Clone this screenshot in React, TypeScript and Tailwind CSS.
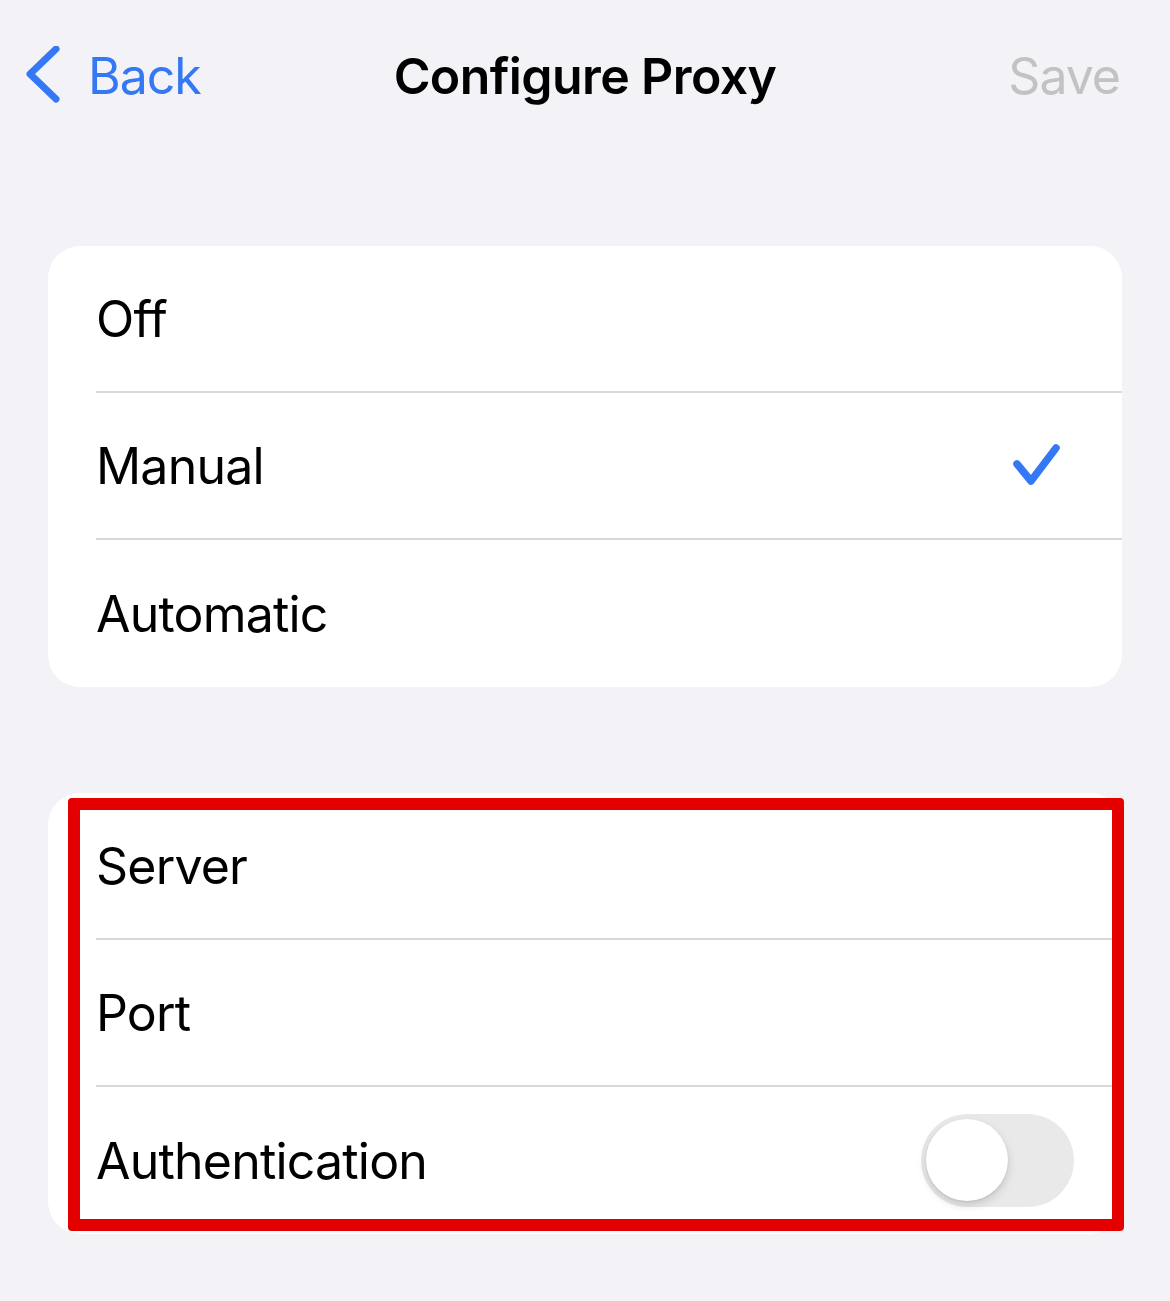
import { useState } from 'react';

const font = { fontFamily: 'Inter, "Noto Sans", sans-serif' };

function Chevron() {
  return (
    <svg width="40" height="60" viewBox="0 0 40 60" className="shrink-0">
      <path d="M30 3 L4 28 L30 53" fill="none" stroke="#3478f6" strokeWidth="7" strokeLinecap="round" strokeLinejoin="round" />
    </svg>
  );
}

function Check() {
  return (
    <svg width="50" height="50" viewBox="0 0 50 50" className="mr-2">
      <path d="M5 23 L19 40 L44 7" fill="none" stroke="#3478f6" strokeWidth="7.5" strokeLinecap="round" strokeLinejoin="round" />
    </svg>
  );
}

function Toggle({ on, onChange }: { on: boolean; onChange: () => void }) {
  return (
    <button
      onClick={onChange}
      className={`relative -mr-1 h-[93px] w-[153px] rounded-full ${on ? 'bg-[#34c759]' : 'bg-[#e9e9ea]'}`}
    >
      <span
        className={`absolute top-[5px] h-[82px] w-[82px] rounded-full bg-white shadow-[0_4px_10px_rgba(0,0,0,0.15),0_1px_2px_rgba(0,0,0,0.08)] ${on ? 'left-[66px]' : 'left-[5px]'}`}
      />
    </button>
  );
}

function Row({ label, last, right }: { label: string; last?: boolean; right?: React.ReactNode }) {
  return (
    <div className="pl-12">
      <div className={`flex h-[147px] items-center justify-between pr-[52px] ${last ? '' : 'border-b-2 border-[#d8d8da]'}`}>
        <span className="text-[50px] leading-none tracking-[-0.016em] text-black">{label}</span>
        {right}
      </div>
    </div>
  );
}

export default function App() {
  const [mode, setMode] = useState('Manual');
  const [auth, setAuth] = useState(false);
  const modes = ['Off', 'Manual', 'Automatic'];

  return (
    <div className="min-h-[1301px] w-[1170px] bg-[#f2f2f7]" style={font}>
      <div className="relative flex h-[150px] items-start pt-[46px]">
        <div className="flex items-center gap-[26px] pl-[26px] text-[50px] leading-[60px] tracking-[-0.02em] text-[#3478f6]">
          <Chevron />
          <span className="-ml-1">Back</span>
        </div>
        <div className="absolute left-0 right-0 top-[46px] text-center text-[50px] font-semibold leading-[60px] tracking-[-0.012em] text-black">
          Configure Proxy
        </div>
        <div className="ml-auto pr-[50px] text-[50px] leading-[60px] tracking-[-0.02em] text-[#c2c2c4]">Save</div>
      </div>

      <div className="px-12 pt-[96px]">
        <div className="overflow-hidden rounded-[32px] bg-white">
          {modes.map((m, i) => (
            <div key={m} onClick={() => setMode(m)}>
              <Row label={m} last={i === modes.length - 1} right={mode === m ? <Check /> : null} />
            </div>
          ))}
        </div>

        <div className="relative mt-[106px] rounded-[32px] bg-white">
          <Row label="Server" />
          <Row label="Port" />
          <Row label="Authentication" last right={<Toggle on={auth} onChange={() => setAuth(!auth)} />} />
          <div className="pointer-events-none absolute top-[5px] left-5 right-[-2px] bottom-[3px] rounded-[4px] border-[12px] border-[#e50000]" />
        </div>
      </div>
    </div>
  );
}
